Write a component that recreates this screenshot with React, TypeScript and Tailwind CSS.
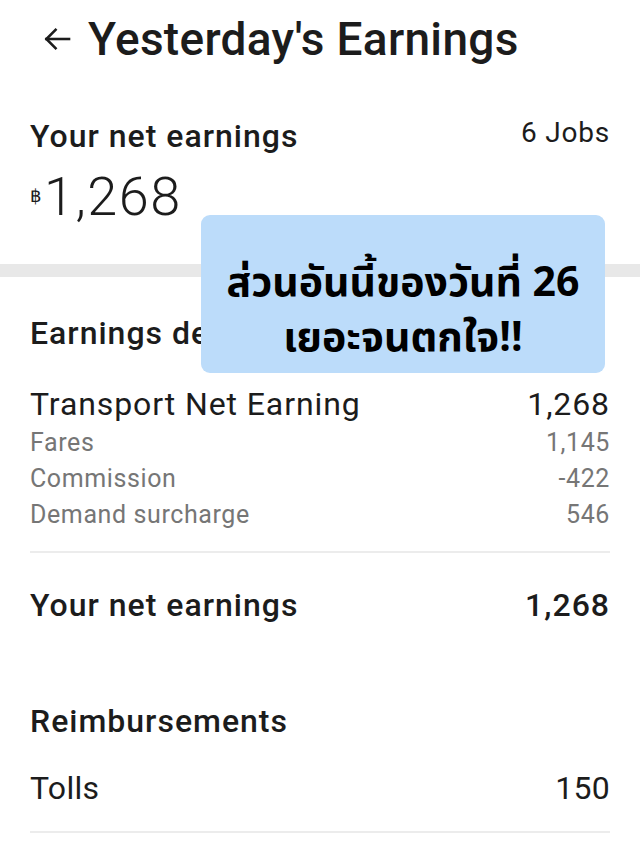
import React from 'react';

const Row = ({ label, value, className }: { label: string; value: string; className: string }) => (
  <div className={`flex items-center justify-between ${className}`}>
    <span>{label}</span>
    <span>{value}</span>
  </div>
);

const App = () => {
  const breakdown = [
    { label: 'Fares', value: '1,145' },
    { label: 'Commission', value: '-422' },
    { label: 'Demand surcharge', value: '546' },
  ];
  return (
    <div className="relative w-[640px] h-[853px] overflow-hidden bg-white text-[#1c1c1c] font-['Roboto','Liberation_Sans',sans-serif]">
      <header className="flex items-center gap-[14px] px-[40px] pt-[2px] h-[76px]">
        <svg width="34" height="34" viewBox="0 0 24 24" fill="none" stroke="currentColor" strokeWidth="1.8" strokeLinecap="square" strokeLinejoin="miter">
          <path d="M20.5 12H4.5" />
          <path d="M11 5.5L4.5 12l6.5 6.5" />
        </svg>
        <h1 className="text-[46px] font-medium leading-none tracking-[0.3px]">Yesterday's Earnings</h1>
      </header>

      <section className="px-[30px] pt-[40px] h-[188px]">
        <div className="flex items-start justify-between">
          <span className="text-[32px] font-medium leading-[40px] tracking-[1px]">Your net earnings</span>
          <span className="text-[28px] leading-[34px] tracking-[0.8px]">6 Jobs</span>
        </div>
        <div className="flex items-start mt-[10px]">
          <span className="text-[18px] mt-[16px] mr-[3px]">฿</span>
          <span className="text-[54px] leading-[62px] font-light tracking-[1.5px]">1,268</span>
        </div>
      </section>

      <div className="h-[13px] bg-[#e8e8e8]" />

      <section className="px-[30px]">
        <h2 className="pt-[36px] text-[32px] font-medium leading-[40px] tracking-[1px]">Earnings details</h2>
        <Row label="Transport Net Earning" value="1,268" className="mt-[30px] text-[32px] leading-[42px] tracking-[0.9px]" />
        <div className="flex flex-col text-[25px] leading-[36px] text-[#767676] tracking-[0.6px]">
          {breakdown.map((b) => (
            <div key={b.label} className="flex justify-between">
              <span>{b.label}</span>
              <span>{b.value}</span>
            </div>
          ))}
        </div>
        <div className="mt-[18px] h-[2px] bg-[#ececec]" />
        <Row label="Your net earnings" value="1,268" className="mt-[32px] text-[32px] font-medium leading-[40px] tracking-[1px]" />
        <h2 className="mt-[76px] text-[32px] font-medium leading-[40px] tracking-[1px]">Reimbursements</h2>
        <Row label="Tolls" value="150" className="mt-[26px] text-[32px] leading-[42px] tracking-[0.3px]" />
        <div className="mt-[22px] h-[2px] bg-[#ececec]" />
      </section>

      <div className="absolute left-[201px] top-[215px] w-[404px] h-[158px] rounded-[9px] bg-[#bcdcfa] flex flex-col items-center justify-center pt-[34px] font-['Noto_Sans_Thai','Loma','Noto_Sans',sans-serif] font-bold text-[41px] leading-[55px] text-black">
        <span>ส่วนอันนี้ของวันที่ 26</span>
        <span>เยอะจนตกใจ!!</span>
      </div>
    </div>
  );
};

export default App;
